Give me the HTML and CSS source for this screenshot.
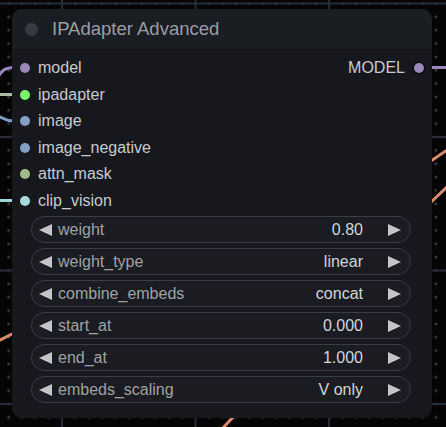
FILE: index.html
```html
<!DOCTYPE html>
<html>
<head>
<meta charset="utf-8">
<link rel="stylesheet" href="styles.css">
</head>
<body>
<div class="canvas">
  <svg class="bg" width="446" height="427" viewBox="0 0 446 427">
    <defs>
      <pattern id="plus" x="8.6" y="3.5" width="13.35" height="13.35" patternUnits="userSpaceOnUse">
        <path d="M-1.5 0H1.5M0 -1.5V1.5" stroke="#4a4d55" stroke-width="1"/>
        <path d="M11.85 0H14.85M13.35 -1.5V1.5M-1.5 13.35H1.5M0 11.85V14.85M11.85 13.35H14.85M13.35 11.85V14.85" stroke="#4a4d55" stroke-width="1"/>
      </pattern>
    </defs>
    <rect width="446" height="427" fill="#050506"/>
    <rect width="446" height="427" fill="url(#plus)"/>
    <g stroke="#272c37" stroke-width="2">
      <line x1="62" y1="0" x2="62" y2="427"/>
      <line x1="195.5" y1="0" x2="195.5" y2="427"/>
      <line x1="329" y1="0" x2="329" y2="427"/>
      <line x1="0" y1="3.5" x2="446" y2="3.5"/>
      <line x1="0" y1="137" x2="446" y2="137"/>
      <line x1="0" y1="270.5" x2="446" y2="270.5"/>
      <line x1="0" y1="404" x2="446" y2="404"/>
    </g>
    <g fill="none" stroke-width="3" stroke-linecap="round">
      <path d="M-4 80 C 2 70, 4 68, 14 67.5" stroke="#9a85ba"/>
      <path d="M-4 94.5 H14" stroke="#a7bca0"/>
      <path d="M-4 115 C 3 118, 5 121, 14 121" stroke="#7f9ec4"/>
      <path d="M-4 200.5 H14" stroke="#9fd6dc"/>
      <path d="M430 67.5 H450" stroke="#9a85ba"/>
      <path d="M-4 342 L14 333" stroke="#d88a6a"/>
      <path d="M428 163 L450 148" stroke="#d88a6a"/>
      <path d="M428 205 L450 184" stroke="#d88a6a"/>
      <path d="M221 430 L236 414" stroke="#d88a6a"/>
    </g>
  </svg>

  <div class="node">
    <div class="title">
      <span class="title-dot"></span>
      <span class="title-text">IPAdapter Advanced</span>
    </div>
    <div class="slots">
      <div class="row">
        <div class="in"><span class="dot c-model"></span>model</div>
        <div class="out">MODEL<span class="dot c-model out-dot"></span></div>
      </div>
      <div class="row"><div class="in"><span class="dot c-ipa"></span>ipadapter</div></div>
      <div class="row"><div class="in"><span class="dot c-image"></span>image</div></div>
      <div class="row"><div class="in"><span class="dot c-image"></span>image_negative</div></div>
      <div class="row"><div class="in"><span class="dot c-mask"></span>attn_mask</div></div>
      <div class="row"><div class="in"><span class="dot c-clip"></span>clip_vision</div></div>
    </div>
    <div class="widgets">
      <div class="widget">
        <svg class="arrow" width="13" height="12" viewBox="0 0 13 12"><path d="M0 6L13 0V12Z"/></svg>
        <span class="label">weight</span>
        <span class="value">0.80</span>
        <svg class="arrow" width="13" height="12" viewBox="0 0 13 12"><path d="M13 6L0 0V12Z"/></svg>
      </div>
      <div class="widget">
        <svg class="arrow" width="13" height="12" viewBox="0 0 13 12"><path d="M0 6L13 0V12Z"/></svg>
        <span class="label">weight_type</span>
        <span class="value">linear</span>
        <svg class="arrow" width="13" height="12" viewBox="0 0 13 12"><path d="M13 6L0 0V12Z"/></svg>
      </div>
      <div class="widget">
        <svg class="arrow" width="13" height="12" viewBox="0 0 13 12"><path d="M0 6L13 0V12Z"/></svg>
        <span class="label">combine_embeds</span>
        <span class="value">concat</span>
        <svg class="arrow" width="13" height="12" viewBox="0 0 13 12"><path d="M13 6L0 0V12Z"/></svg>
      </div>
      <div class="widget">
        <svg class="arrow" width="13" height="12" viewBox="0 0 13 12"><path d="M0 6L13 0V12Z"/></svg>
        <span class="label">start_at</span>
        <span class="value">0.000</span>
        <svg class="arrow" width="13" height="12" viewBox="0 0 13 12"><path d="M13 6L0 0V12Z"/></svg>
      </div>
      <div class="widget">
        <svg class="arrow" width="13" height="12" viewBox="0 0 13 12"><path d="M0 6L13 0V12Z"/></svg>
        <span class="label">end_at</span>
        <span class="value">1.000</span>
        <svg class="arrow" width="13" height="12" viewBox="0 0 13 12"><path d="M13 6L0 0V12Z"/></svg>
      </div>
      <div class="widget">
        <svg class="arrow" width="13" height="12" viewBox="0 0 13 12"><path d="M0 6L13 0V12Z"/></svg>
        <span class="label">embeds_scaling</span>
        <span class="value">V only</span>
        <svg class="arrow" width="13" height="12" viewBox="0 0 13 12"><path d="M13 6L0 0V12Z"/></svg>
      </div>
    </div>
  </div>
</div>
</body>
</html>
```

FILE: styles.css
```css
* { box-sizing: border-box; }
html, body {
  margin: 0;
  padding: 0;
  background: #050506;
  overflow: hidden;
}
.canvas {
  position: relative;
  width: 446px;
  height: 427px;
  font-family: "Liberation Sans", Arial, sans-serif;
}
.bg {
  position: absolute;
  left: 0;
  top: 0;
  display: block;
}
.node {
  position: absolute;
  left: 12px;
  top: 9px;
  width: 420px;
  height: 409px;
  background: #16181d;
  border-radius: 10px;
  display: flex;
  flex-direction: column;
  overflow: hidden;
}
.title {
  height: 41px;
  background: #1a1d22;
  border-bottom: 1px solid #121418;
  display: flex;
  align-items: center;
  padding-left: 13px;
  gap: 14px;
}
.title-dot {
  width: 13px;
  height: 13px;
  border-radius: 50%;
  background: #383b43;
}
.title-text {
  font-size: 18.5px;
  color: #9c9ea3;
}
.slots {
  padding-top: 5px;
  display: flex;
  flex-direction: column;
}
.row {
  height: 26.5px;
  display: flex;
  align-items: center;
  justify-content: space-between;
  padding: 0 8px;
  font-size: 16px;
  color: #c9cacd;
}
.in, .out {
  display: flex;
  align-items: center;
}
.in .dot { margin-right: 8px; }
.out .dot { margin-left: 9px; }
.dot {
  width: 10px;
  height: 10px;
  border-radius: 50%;
  display: inline-block;
}
.out-dot {
  box-shadow: 0 0 0 1.5px #0c0d10;
}
.c-model { background: #9b87ba; }
.c-ipa { background: #7af86c; }
.c-image { background: #84a0c5; }
.c-mask { background: #a3bb8b; }
.c-clip { background: #a8dcdc; }
.widgets {
  margin-top: 2px;
  padding: 0 21px 0 19px;
  display: flex;
  flex-direction: column;
  gap: 5px;
}
.widget {
  height: 27px;
  border: 1px solid #3a3d45;
  border-radius: 14px;
  background: #1a1c21;
  display: flex;
  align-items: center;
  padding: 0 9px 0 7px;
  font-size: 16px;
}
.arrow {
  fill: #c3c5cb;
  flex: none;
}
.label {
  margin-left: 6px;
  color: #a0a2a6;
  flex: 1;
}
.value {
  color: #d4d5d8;
  margin-right: 25px;
}
```
